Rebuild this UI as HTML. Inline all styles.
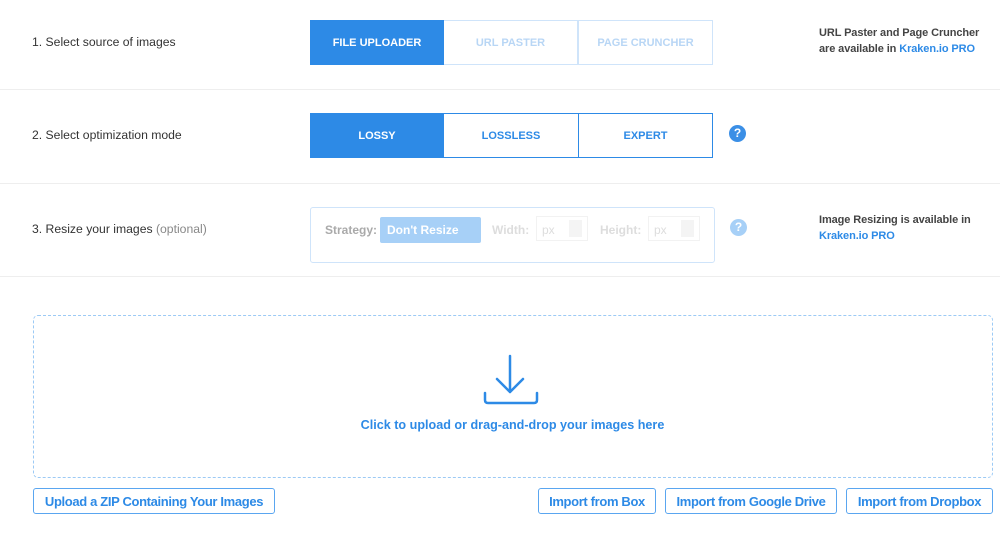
<!DOCTYPE html>
<html><head><style>
*{margin:0;padding:0;box-sizing:border-box}
body{width:1000px;height:546px;background:#fff;font-family:"Liberation Sans",Arial,sans-serif;position:relative;overflow:hidden;color:#333}
.a{position:absolute}
.lbl{font-size:12.2px;color:#333}
.hr{position:absolute;left:0;width:1000px;height:1px;background:#eee}
.seg{position:absolute;display:flex}
.seg div{height:100%;display:flex;align-items:center;justify-content:center;font-size:11px;font-weight:bold}
.q{position:absolute;width:17px;height:17px;border-radius:50%;background:#3b8fe6;color:#fff;font-size:12px;font-weight:bold;text-align:center;line-height:17px}
.btn{position:absolute;top:488px;height:26px;border:1px solid #5aa6f0;border-radius:3px;color:#2d8ae6;font-size:13px;font-weight:bold;letter-spacing:-.35px;display:flex;align-items:center;justify-content:center}
.note{position:absolute;font-size:11px;line-height:16px;color:#444;font-weight:bold;letter-spacing:-.1px}
.note b{color:#2d8ae6}
</style></head><body>
<div class="a lbl" style="left:32px;top:35px">1. Select source of images</div>
<div class="seg" style="left:310px;top:20px;width:403px;height:45px">
<div style="width:134px;background:#2d8ae6;color:#fff">FILE UPLOADER</div>
<div style="width:134px;border:1px solid #cfe4fa;border-left:none;color:#b8d6f5">URL PASTER</div>
<div style="width:135px;border:1px solid #cfe4fa;border-left:1px solid #cfe4fa;color:#b8d6f5">PAGE CRUNCHER</div>
</div>
<div class="note" style="left:819px;top:25px">URL Paster and Page Cruncher<br>are available in <b>Kraken.io PRO</b></div>
<div class="hr" style="top:89px"></div>

<div class="a lbl" style="left:32px;top:128px">2. Select optimization mode</div>
<div class="seg" style="left:310px;top:113px;width:403px;height:45px">
<div style="width:134px;background:#2d8ae6;color:#fff">LOSSY</div>
<div style="width:135px;border:1px solid #2d8ae6;border-left:none;color:#2d8ae6">LOSSLESS</div>
<div style="width:134px;border:1px solid #2d8ae6;border-left:none;color:#2d8ae6">EXPERT</div>
</div>
<div class="q" style="left:729px;top:125px">?</div>
<div class="hr" style="top:183px"></div>

<div class="a lbl" style="left:32px;top:222px">3. Resize your images <span style="color:#888">(optional)</span></div>
<div class="a" style="left:310px;top:207px;width:405px;height:56px;border:1px solid #cfe4fa;border-radius:3px"></div>
<div class="a" style="left:325px;top:223px;font-size:12px;font-weight:bold;color:#aaa">Strategy:</div>
<div class="a" style="left:380px;top:217px;width:101px;height:26px;background:#a7d0f7;border-radius:2px;color:#fff;font-size:12px;font-weight:bold;padding:6px 0 0 7px">Don't Resize</div>
<div class="a" style="left:492px;top:223px;font-size:12px;font-weight:bold;color:#ddd">Width:</div>
<div class="a" style="left:536px;top:216px;width:52px;height:25px;border:1px solid #f2f2f2;font-size:12px;color:#ddd;padding:6px 0 0 5px">px<span style="position:absolute;right:5px;top:3px;width:13px;height:17px;background:#f4f4f4"></span></div>
<div class="a" style="left:600px;top:223px;font-size:12px;font-weight:bold;color:#ddd">Height:</div>
<div class="a" style="left:648px;top:216px;width:52px;height:25px;border:1px solid #f2f2f2;font-size:12px;color:#ddd;padding:6px 0 0 5px">px<span style="position:absolute;right:5px;top:3px;width:13px;height:17px;background:#f4f4f4"></span></div>
<div class="q" style="left:730px;top:219px;background:#a7d0f7">?</div>
<div class="note" style="left:819px;top:212px">Image Resizing is available in<br><b>Kraken.io PRO</b></div>
<div class="hr" style="top:276px"></div>

<div class="a" style="left:33px;top:315px;width:960px;height:163px;border:1px dashed #9ccaf5;border-radius:5px"></div>
<svg class="a" style="left:480px;top:350px" width="62" height="56" viewBox="480 350 62 56">
<g fill="none" stroke="#2d8ae6" stroke-width="2.5" stroke-linecap="round" stroke-linejoin="round">
<path d="M510 356V392M497 379L510 392L523 379"/>
<path d="M485 393V400Q485 403 488 403H534Q537 403 537 400V393"/>
</g></svg>
<div class="a" style="left:0;width:1025px;top:418px;text-align:center;font-size:12.6px;font-weight:bold;color:#2d8ae6">Click to upload or drag-and-drop your images here</div>

<div class="btn" style="left:33px;width:242px">Upload a ZIP Containing Your Images</div>
<div class="btn" style="left:538px;width:118px">Import from Box</div>
<div class="btn" style="left:665px;width:172px">Import from Google Drive</div>
<div class="btn" style="left:846px;width:147px">Import from Dropbox</div>
</body></html>
